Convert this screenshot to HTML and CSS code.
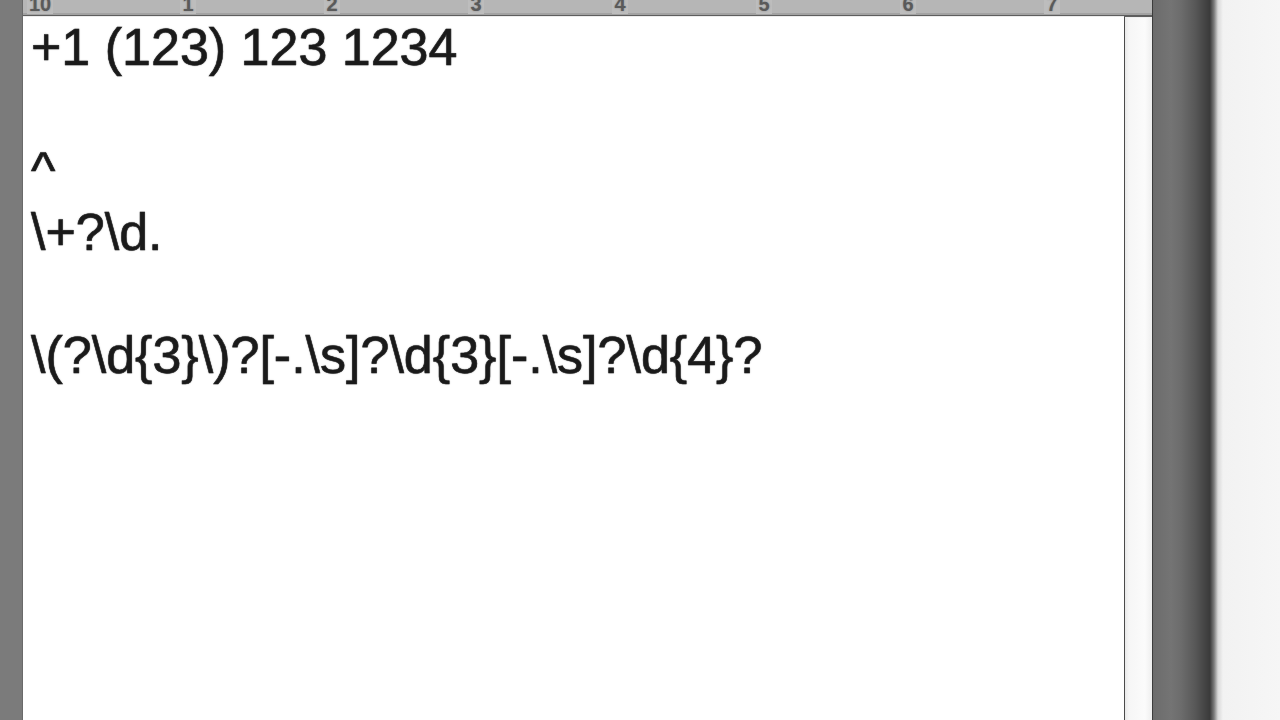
FILE: index.html
```html
<!DOCTYPE html>
<html>
<head>
<meta charset="utf-8">
<link rel="stylesheet" href="styles.css">
</head>
<body>
<div class="app">
  <div class="leftbar"></div>
  <div class="doc">
    <div class="ruler">
      <div class="cell first"><span class="lbl">10</span></div>
      <div class="cell"><span class="lbl">1</span></div>
      <div class="cell"><span class="lbl">2</span></div>
      <div class="cell"><span class="lbl">3</span></div>
      <div class="cell"><span class="lbl">4</span></div>
      <div class="cell"><span class="lbl">5</span></div>
      <div class="cell"><span class="lbl">6</span></div>
      <div class="cell"><span class="lbl">7</span></div>
    </div>
    <div class="docbody">
      <div class="page">
        <div class="line">+1 (123) 123 1234</div>
        <div class="line"></div>
        <div class="line">^</div>
        <div class="line">\+?\d.</div>
        <div class="line"></div>
        <div class="line">\(?\d{3}\)?[-.\s]?\d{3}[-.\s]?\d{4}?</div>
      </div>
      <div class="vline"></div>
      <div class="margin"></div>
    </div>
  </div>
  <div class="border"></div>
  <div class="shadow"></div>
</div>
</body>
</html>
```

FILE: styles.css
```css
html, body {
  margin: 0;
  padding: 0;
  width: 1280px;
  height: 720px;
  overflow: hidden;
  background: #f6f6f6;
}

.app {
  display: flex;
  width: 1280px;
  height: 720px;
}

.leftbar {
  width: 22px;
  flex: none;
  background: #7b7b7b;
  border-right: 1px solid #6a6a6a;
}

.doc {
  width: 1129px;
  flex: none;
  display: flex;
  flex-direction: column;
}

.ruler {
  height: 15px;
  flex: none;
  display: flex;
  align-items: flex-start;
  overflow: hidden;
  background: #b6b6b6;
  border-bottom: 2px solid #5e5e5e;
  box-shadow: inset 0 -2px 0 #a2a2a2;
}

.cell {
  width: 144px;
  flex: none;
  display: flex;
  justify-content: center;
}

.cell.first {
  width: 93px;
  justify-content: flex-start;
  padding-left: 4px;
  box-sizing: border-box;
}

.lbl {
  font-family: "Liberation Sans", Arial, sans-serif;
  font-size: 20px;
  line-height: 20px;
  font-weight: bold;
  margin-top: -6px;
  padding: 0 2px;
  color: #5a5a5a;
  background: #bdbdbd;
  text-shadow: 0 0 2px #888;
}

.docbody {
  flex: 1;
  display: flex;
}

.page {
  width: 1101px;
  flex: none;
  box-sizing: border-box;
  background: #ffffff;
  border-top: 1px solid #ececec;
  padding: 0 0 0 8px;
  margin-top: -1px;
  font-family: "Liberation Sans", Arial, Helvetica, sans-serif;
  font-size: 52px;
  line-height: 61.7px;
  color: #1a1a1a;
  -webkit-text-stroke: 0.6px #222222;
  text-shadow: 0 0 1.5px rgba(0, 0, 0, 0.6);
}

.line {
  height: 61.7px;
  white-space: pre;
}

.vline {
  width: 1px;
  flex: none;
  background: #4a4a4a;
}

.margin {
  flex: 1;
  background: linear-gradient(to right, #e9e9e9 0, #f6f6f6 4px, #fbfbfb 20px, #eeeeee 27px);
  border-top: 1px solid #f0f0f0;
}

.border {
  width: 1px;
  flex: none;
  background: #3c3c3c;
}

.shadow {
  flex: 1;
  background:
    linear-gradient(to right,
      #6c6c6c 0,
      #747474 18px,
      #6c6c6c 28px,
      #585858 42px,
      #424242 53px,
      #3a3a3a 57px,
      #7a7a7a 61px,
      #d8d8d8 65px,
      #f2f2f2 70px,
      #f6f6f6 100%);
}
```
